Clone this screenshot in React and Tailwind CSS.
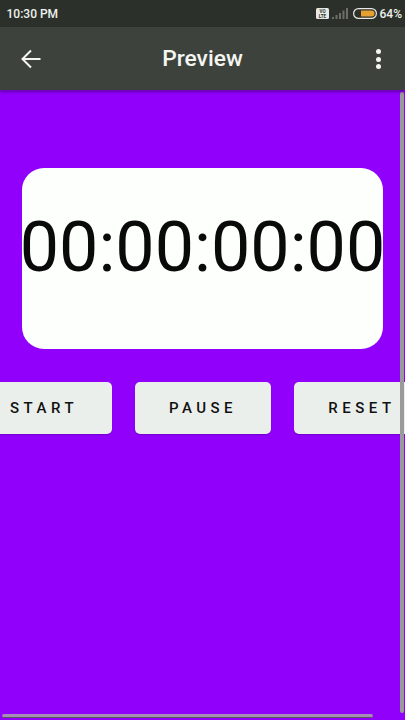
import React from "react";

function Btn({ children }) {
  return (
    <button className="w-[136px] h-[52px] shrink-0 rounded-[5px] bg-[#ebefec] text-[#111] text-[15px] font-medium tracking-[4.5px] flex items-center justify-center shadow-[0_1px_1px_rgba(0,0,0,0.2)]">
      {children}
    </button>
  );
}

export default function App() {
  return (
    <div className="relative w-[405px] h-[720px] overflow-hidden flex flex-col bg-[#9000fb] font-['Roboto',sans-serif]">
      {/* status bar */}
      <div className="h-[27px] shrink-0 bg-[#2c302b] flex items-center justify-between pl-[6.5px] pr-[3px] text-[#eef0ec]">
        <span className="text-[12px] font-medium leading-none mt-[1px]">10:30 PM</span>
        <div className="flex items-center">
          <svg width="13" height="11" viewBox="0 0 13 11">
            <rect width="13" height="11" rx="1.5" fill="#e8e8e4" />
            <text x="6.5" y="4.6" fontSize="4.5" fontWeight="700" textAnchor="middle" fill="#2c302b" fontFamily="Roboto">VO</text>
            <text x="6.5" y="9.6" fontSize="4.5" fontWeight="700" textAnchor="middle" fill="#2c302b" fontFamily="Roboto">LTE</text>
          </svg>
          <svg width="16" height="11" viewBox="0 0 16 11" className="ml-[3px]">
            <rect x="0" y="9" width="2" height="2" fill="#6b6e69" />
            <rect x="3.5" y="7" width="2" height="4" fill="#6b6e69" />
            <rect x="7" y="5" width="2" height="6" fill="#6b6e69" />
            <rect x="10.5" y="2.5" width="2" height="8.5" fill="#6b6e69" />
            <rect x="14" y="0" width="2" height="11" fill="#6b6e69" />
          </svg>
          <svg width="24" height="11" viewBox="0 0 24 11" className="ml-[5px]">
            <rect x="0.6" y="0.6" width="22.8" height="9.8" rx="4.9" fill="none" stroke="#e8e8e0" strokeWidth="1.2" />
            <path d="M8 2.5H18.5a3 3 0 0 1 0 6H8z" fill="#e6a032" />
          </svg>
          <span className="text-[12px] font-medium leading-none ml-[3px] mt-[1px]">64%</span>
        </div>
      </div>

      {/* toolbar */}
      <div className="h-[63px] shrink-0 bg-[#3e423d] flex items-center pl-[21px] pr-[24px] shadow-[0_2px_3px_rgba(0,0,0,0.3)] z-10">
        <div className="w-[24px] shrink-0">
          <svg width="20" height="20" viewBox="0 0 20 20" fill="none" stroke="#f4f6f2" strokeWidth="2" className="block">
            <path d="M19.5 10H2" />
            <path d="M10 1.5L1.5 10L10 18.5" />
          </svg>
        </div>
        <span className="flex-1 text-center text-[22.75px] font-medium text-[#f4f6f2] leading-none mt-[2px] pl-[3px]">Preview</span>
        <div className="w-[24px] shrink-0 flex flex-col items-end gap-[2.5px] mt-[1px]">
          <span className="w-[5px] h-[5px] rounded-full bg-[#f4f6f2]" />
          <span className="w-[5px] h-[5px] rounded-full bg-[#f4f6f2]" />
          <span className="w-[5px] h-[5px] rounded-full bg-[#f4f6f2]" />
        </div>
      </div>

      {/* content */}
      <div className="flex-1 flex flex-col pt-[78px]">
        <div className="ml-[22px] w-[361px] h-[181px] rounded-[22px] bg-[#fcfffc] flex justify-center pt-[39px]">
          <span className="text-[70px] leading-[81px] font-normal text-[#0a0a0a] whitespace-nowrap">00:00:00:00</span>
        </div>
        <div className="flex gap-[23px] ml-[-24px] mt-[33px]">
          <Btn>START</Btn>
          <Btn>PAUSE</Btn>
          <Btn>RESET</Btn>
        </div>
      </div>

      {/* overlay scrollbars */}
      <div className="absolute left-[400px] top-[92px] w-[4px] h-[621px] rounded-[2px] bg-[#9a9a9a]" />
      <div className="absolute left-[2px] top-[714px] w-[371px] h-[4px] rounded-[2px] bg-[#a88cb8] border-b border-[#555]" />
    </div>
  );
}
